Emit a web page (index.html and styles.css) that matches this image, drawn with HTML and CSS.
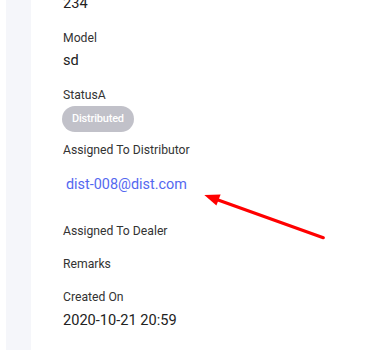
FILE: index.html
```html
<!DOCTYPE html>
<html lang="en">
<head>
    <meta charset="UTF-8">
    <title>Device Details</title>
    <link rel="stylesheet" href="styles.css">
</head>
<body>
    <div class="layout">
        <div class="sidebar"></div>
        <div class="details">
            <div class="item first">
                <div class="value">234</div>
            </div>
            <div class="item">
                <div class="label">Model</div>
                <div class="value">sd</div>
            </div>
            <div class="item">
                <div class="label">StatusA</div>
                <div class="value status"><span class="badge">Distributed</span></div>
            </div>
            <div class="item">
                <div class="label">Assigned To Distributor</div>
                <a class="link" href="#">dist-008@dist.com</a>
            </div>
            <div class="item">
                <div class="label">Assigned To Dealer</div>
            </div>
            <div class="item">
                <div class="label">Remarks</div>
            </div>
            <div class="item">
                <div class="label">Created On</div>
                <div class="value">2020-10-21 20:59</div>
            </div>
        </div>
    </div>

    <!-- annotation arrow -->
    <svg class="arrow" width="130" height="52" viewBox="0 0 130 52">
        <line x1="123.3" y1="47.7" x2="16" y2="9.2" stroke="#f00" stroke-width="3.2" stroke-linecap="round"/>
        <polygon points="4.3,5 20.6,4.6 16.4,15.6" fill="#f00"/>
    </svg>
</body>
</html>
```

FILE: styles.css
```css
body {
    margin: 0;
    background: #fff;
    font-family: Roboto, 'Liberation Sans', sans-serif;
    color: #222;
}

.layout {
    display: flex;
    height: 350px;
    overflow: hidden;
    padding-left: 6px;
}

.sidebar {
    width: 25px;
    background: #f5f6fa;
}

.details {
    padding-left: 32px;
    margin-top: -8px;
}

.item {
    margin-bottom: 16px;
}

.item.first {
    margin-bottom: 15.5px;
}

.label {
    font-size: 12.2px;
    line-height: 17px;
    color: #333;
}

.value {
    font-size: 14.6px;
    line-height: 22px;
    margin-top: 2.5px;
}

.item.first .value {
    margin-top: 0;
}

.value.status {
    height: 19px;
    line-height: 19px;
}

.badge {
    display: inline-block;
    vertical-align: top;
    margin: -1px 0 0 -1px;
    background: #c1c1c9;
    color: #fff;
    font-size: 11px;
    font-weight: 500;
    letter-spacing: -0.2px;
    line-height: 26px;
    padding: 0 10px;
    border-radius: 13px;
}

.link {
    display: block;
    color: #5468f0;
    font-size: 14.4px;
    line-height: 22px;
    padding: 15.5px 3px 11px;
    text-decoration: none;
}

.arrow {
    position: absolute;
    left: 200px;
    top: 190px;
}
```
